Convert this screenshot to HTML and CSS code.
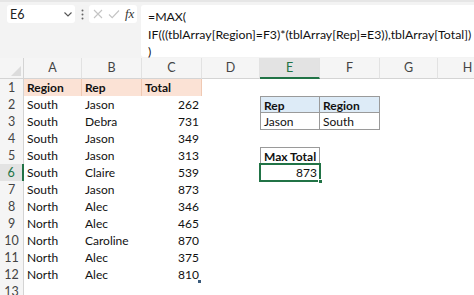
FILE: index.html
```html
<!DOCTYPE html>
<html>
<head>
<meta charset="utf-8">
<link rel="stylesheet" href="styles.css">
</head>
<body>
<div class="app">
  <div class="bar">
    <div class="namebox">
      <span class="ref">E6</span>
      <svg class="chev" width="8" height="5" viewBox="0 0 8 5"><path d="M0.5 0.5 L4 4 L7.5 0.5" fill="none" stroke="#555" stroke-width="1.1"/></svg>
    </div>
    <div class="grip">
      <svg width="3" height="11" viewBox="0 0 3 11"><circle cx="1.5" cy="1.5" r="1" fill="#666"/><circle cx="1.5" cy="5.5" r="1" fill="#666"/><circle cx="1.5" cy="9.5" r="1" fill="#666"/></svg>
    </div>
    <div class="fxbox">
      <svg width="10" height="10" viewBox="0 0 10 10"><path d="M1 1 L9 9 M9 1 L1 9" stroke="#c4c4c4" stroke-width="1.1"/></svg>
      <svg width="12" height="10" viewBox="0 0 12 10"><path d="M1 5.5 L4.2 8.7 L11 1.5" fill="none" stroke="#c4c4c4" stroke-width="1.1"/></svg>
      <span class="fx">fx</span>
    </div>
    <div class="formula">=MAX(<br>IF(((tblArray[Region]=F3)*(tblArray[Rep]=E3)),tblArray[Total])<br>)</div>
  </div>
  <div class="sheet">
    <div class="corner"><svg width="10" height="10" viewBox="0 0 10 10"><path d="M10 0 L10 10 L0 10 Z" fill="#dcdcdc"/></svg></div>
    <div class="ch">A</div><div class="ch">B</div><div class="ch">C</div><div class="ch">D</div><div class="ch sel">E</div><div class="ch">F</div><div class="ch">G</div><div class="ch">H</div>

    <div class="rh">1</div><div class="c th">Region</div><div class="c th">Rep</div><div class="c th">Total</div><div class="c"></div><div class="c"></div><div class="c"></div><div class="c"></div><div class="c"></div>
    <div class="rh">2</div><div class="c">South</div><div class="c">Jason</div><div class="c n">262</div><div class="c"></div><div class="c b hd bt bl br bb">Rep</div><div class="c b hd bt br bb">Region</div><div class="c"></div><div class="c"></div>
    <div class="rh">3</div><div class="c">South</div><div class="c">Debra</div><div class="c n">731</div><div class="c"></div><div class="c bl br bb">Jason</div><div class="c br bb">South</div><div class="c"></div><div class="c"></div>
    <div class="rh">4</div><div class="c">South</div><div class="c">Jason</div><div class="c n">349</div><div class="c"></div><div class="c"></div><div class="c"></div><div class="c"></div><div class="c"></div>
    <div class="rh">5</div><div class="c">South</div><div class="c">Jason</div><div class="c n">313</div><div class="c"></div><div class="c b bt bl br bb">Max Total</div><div class="c"></div><div class="c"></div><div class="c"></div>
    <div class="rh rsel">6</div><div class="c">South</div><div class="c">Claire</div><div class="c n">539</div><div class="c"></div><div class="c n active">873<span class="handle"></span></div><div class="c"></div><div class="c"></div><div class="c"></div>
    <div class="rh">7</div><div class="c">South</div><div class="c">Jason</div><div class="c n">873</div><div class="c"></div><div class="c"></div><div class="c"></div><div class="c"></div><div class="c"></div>
    <div class="rh">8</div><div class="c">North</div><div class="c">Alec</div><div class="c n">346</div><div class="c"></div><div class="c"></div><div class="c"></div><div class="c"></div><div class="c"></div>
    <div class="rh">9</div><div class="c">North</div><div class="c">Alec</div><div class="c n">465</div><div class="c"></div><div class="c"></div><div class="c"></div><div class="c"></div><div class="c"></div>
    <div class="rh">10</div><div class="c">North</div><div class="c">Caroline</div><div class="c n">870</div><div class="c"></div><div class="c"></div><div class="c"></div><div class="c"></div><div class="c"></div>
    <div class="rh">11</div><div class="c">North</div><div class="c">Alec</div><div class="c n">375</div><div class="c"></div><div class="c"></div><div class="c"></div><div class="c"></div><div class="c"></div>
    <div class="rh">12</div><div class="c">North</div><div class="c">Alec</div><div class="c n">810<span class="tresize"></span></div><div class="c"></div><div class="c"></div><div class="c"></div><div class="c"></div><div class="c"></div>
    <div class="rh">13</div><div class="c"></div><div class="c"></div><div class="c"></div><div class="c"></div><div class="c"></div><div class="c"></div><div class="c"></div><div class="c"></div>
  </div>
</div>
</body>
</html>
```
FILE: styles.css
```css
* { box-sizing: border-box; }
html, body { margin: 0; padding: 0; }
body {
  width: 474px;
  height: 295px;
  overflow: hidden;
  background: #ffffff;
  font-family: "Lato", "Liberation Sans", sans-serif;
  font-size: 12px;
  color: #111;
}
.app { width: 474px; height: 295px; overflow: hidden; }

.bar {
  height: 58px;
  background: #f3f3f3;
  border-top: 2px solid #e6e6e6;
  display: flex;
  align-items: flex-start;
  padding: 3px 0 0 7px;
}
.namebox {
  width: 68px;
  height: 18px;
  background: #fff;
  border-radius: 3px;
  display: flex;
  align-items: center;
  justify-content: space-between;
  padding: 0 3px 0 3px;
  font-size: 12.5px;
  color: #222;
}
.grip {
  width: 14px;
  height: 18px;
  display: flex;
  align-items: center;
  justify-content: center;
}
.fxbox {
  width: 48px;
  height: 18px;
  background: #fff;
  border-radius: 3px;
  display: flex;
  align-items: center;
  gap: 5px;
  padding: 0 0 0 4px;
}
.fx {
  font-family: "Liberation Serif", serif;
  font-style: italic;
  font-size: 13px;
  color: #333;
}
.formula {
  flex: 1;
  margin-left: 4px;
  height: 52px;
  background: #fff;
  border-radius: 3px 0 0 3px;
  padding: 3px 0 0 7px;
  line-height: 17.5px;
  white-space: nowrap;
  font-size: 12.3px;
  color: #111;
}

.sheet {
  display: grid;
  grid-template-columns: 24px 58px 60px 60px 58px 60px 60px 58px 60px;
  grid-template-rows: 21px;
  grid-auto-rows: 17px;
  width: 498px;
}
.corner {
  background: #f5f5f5;
  border-bottom: 1px solid #d4d4d4;
  border-right: 1px solid #d4d4d4;
  display: flex;
  align-items: flex-end;
  justify-content: flex-end;
  padding: 0 2px 2px 0;
}
.ch {
  background: #f5f5f5;
  border-bottom: 1px solid #d4d4d4;
  border-right: 1px solid #e2e2e2;
  text-align: center;
  line-height: 20px;
  color: #444;
  font-size: 12.5px;
}
.ch.sel {
  background: #e3e3e3;
  border-bottom: 2px solid #217346;
  color: #217346;
}
.rh {
  background: #f5f5f5;
  border-right: 1px solid #d4d4d4;
  text-align: center;
  line-height: 17px;
  color: #444;
  font-size: 12.5px;
}
.rh.rsel {
  background: #e3e3e3;
  border-right: 2px solid #217346;
  color: #217346;
}
.c {
  line-height: 17px;
  padding: 0 3px;
  white-space: nowrap;
  position: relative;
}
.n { text-align: right; }
.b { font-weight: bold; }
.th {
  font-weight: bold;
  background: #fbe2d5;
  border-right: 1px solid #f0c9b3;
}
.hd { background: #ddebf7; }
.bt { border-top: 1px solid #9a9a9a; }
.bl { border-left: 1px solid #9a9a9a; }
.br { border-right: 1px solid #9a9a9a; }
.bb { border-bottom: 1px solid #9a9a9a; }
.active {
  box-shadow: 0 0 0 1px #217346, inset 0 0 0 1px #217346;
  z-index: 2;
}
.handle {
  position: absolute;
  right: -3px;
  bottom: -3px;
  width: 5px;
  height: 5px;
  background: #217346;
  border: 1px solid #fff;
}
.tresize {
  position: absolute;
  right: 1px;
  bottom: 0;
  width: 3px;
  height: 3px;
  background: #3b5b7c;
}
```
